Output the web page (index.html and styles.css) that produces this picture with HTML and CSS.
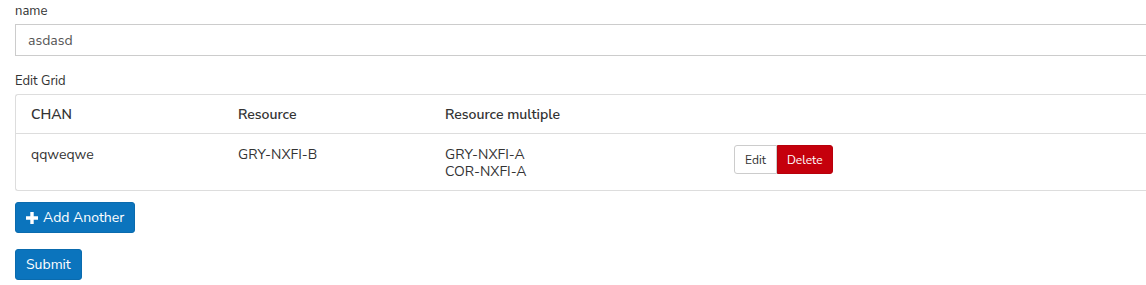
FILE: index.html
```html
<!DOCTYPE html>
<html lang="en">
<head>
  <meta charset="UTF-8">
  <title>Edit Grid Form</title>
  <link rel="stylesheet" href="styles.css">
</head>
<body>
  <form class="form-wrap">
    <div class="form-group">
      <label class="control-label" for="name">name</label>
      <input class="form-control" id="name" type="text" value="asdasd">
    </div>

    <div class="form-group">
      <label class="control-label">Edit Grid</label>
      <div class="grid-panel">
        <table class="grid-table">
          <colgroup>
            <col class="col-a"><col class="col-b"><col class="col-c"><col>
          </colgroup>
          <thead>
            <tr>
              <th>CHAN</th>
              <th>Resource</th>
              <th>Resource multiple</th>
              <th></th>
            </tr>
          </thead>
          <tbody>
            <tr>
              <td>qqweqwe</td>
              <td>GRY-NXFI-B</td>
              <td>GRY-NXFI-A<br>COR-NXFI-A</td>
              <td>
                <div class="btn-group">
                  <button type="button" class="btn btn-sm btn-default">Edit</button>
                  <button type="button" class="btn btn-sm btn-danger">Delete</button>
                </div>
              </td>
            </tr>
          </tbody>
        </table>
      </div>
    </div>

    <button type="button" class="btn btn-primary add-btn">
      <svg class="plus" width="12" height="12" viewBox="0 0 12 12"><path d="M4.3 0h3.4v4.3H12v3.4H7.7V12H4.3V7.7H0V4.3h4.3z" fill="#fff"/></svg>
      Add Another
    </button>

    <button type="submit" class="btn btn-primary submit-btn">Submit</button>
  </form>
</body>
</html>
```

FILE: styles.css
```css
html, body { margin: 0; }
body {
  font-family: 'Nunito Sans', Lato, 'Open Sans', sans-serif;
  font-size: 14px;
  color: #333;
  background: #fff;
}
.form-wrap { padding: 2px 0 0 15px; }
.form-group { margin-bottom: 8px; }
.control-label {
  display: block; font-size: 13px; color: #333; line-height: 18px; margin-bottom: 4px;
}
.form-control {
  display: block; width: 100%; box-sizing: border-box; height: 32px;
  padding: 0 12px; margin: 0 0 16px;
  border: 1px solid #ccc; border-right: none; border-radius: 0;
  font-family: inherit; font-size: 14px; color: #555;
}
.grid-panel { border: 1px solid #ddd; border-right: none; border-radius: 3px 0 0 3px; margin-bottom: 11px; }
.grid-table { width: 100%; border-collapse: collapse; table-layout: fixed; }
.col-a, .col-b { width: 207px; }
.col-c { width: 289px; }
.grid-table th {
  text-align: left; font-weight: 600; height: 38px; padding: 0 15px;
  border-bottom: 1px solid #ddd; vertical-align: middle;
}
.grid-table td {
  padding: 12px 15px 9px; vertical-align: top; line-height: 17px; height: 35px;
}
.btn {
  font-family: inherit; font-size: 14px; border: 1px solid transparent;
  border-radius: 3px; cursor: pointer; padding: 0 12px; height: 31px; line-height: 29px;
}
.btn-primary { background: #0b74bd; color: #fff; border-color: #0a6bae; }
.btn-sm { font-size: 12px; height: 29px; padding: 0 10px; }
.btn-group { display: flex; margin-top: -1px; }
.btn-group .btn { border-radius: 0; }
.btn-group .btn:first-child { border-radius: 3px 0 0 3px; }
.btn-group .btn:last-child { border-radius: 0 3px 3px 0; }
.btn-default { background: #fff; color: #333; border-color: #ccc; }
.btn-danger { background: #c5000c; color: #fff; border-color: #b8000b; padding: 0 9px; }
.add-btn { display: flex; align-items: center; gap: 5px; padding: 0 10px; }
.submit-btn { display: block; margin-top: 16px; padding: 0 10px; }
```
